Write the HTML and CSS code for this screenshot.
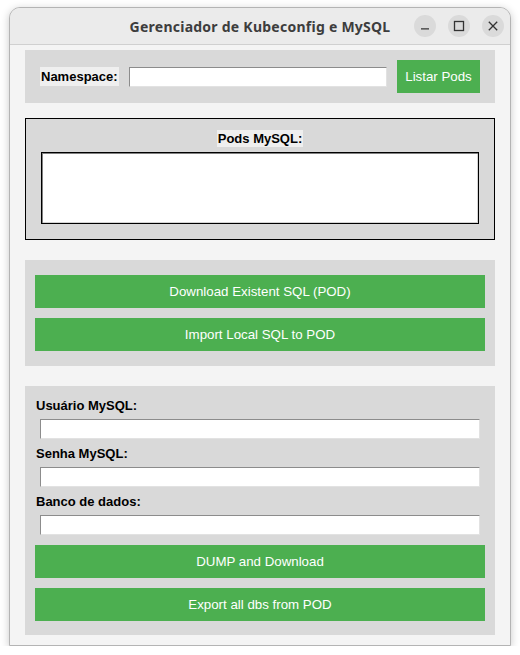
FILE: index.html
```html
<!DOCTYPE html>
<html lang="pt">
<head>
<meta charset="utf-8">
<title>Gerenciador de Kubeconfig e MySQL</title>
<link rel="stylesheet" href="styles.css">
</head>
<body>
<div class="window">
  <div class="titlebar">
    <span class="title">Gerenciador de Kubeconfig e MySQL</span>
    <div class="controls">
      <span class="ctl"><svg width="22" height="22" viewBox="0 0 22 22"><path d="M7 13.8h8" stroke="#333" stroke-width="1.3" fill="none"/></svg></span>
      <span class="ctl"><svg width="22" height="22" viewBox="0 0 22 22"><rect x="6.5" y="6.5" width="9" height="9" stroke="#333" stroke-width="1.3" fill="none"/></svg></span>
      <span class="ctl"><svg width="22" height="22" viewBox="0 0 22 22"><path d="M6.8 6.8l8.4 8.4M15.2 6.8l-8.4 8.4" stroke="#333" stroke-width="1.3" fill="none"/></svg></span>
    </div>
  </div>
  <div class="content">
    <div class="frame ns">
      <span class="lbl hl">Namespace:</span>
      <div class="entry grow"></div>
      <div class="btn small">Listar Pods</div>
    </div>
    <div class="frame pods">
      <span class="lbl hl pods-lbl">Pods MySQL:</span>
      <div class="listbox"></div>
    </div>
    <div class="frame actions">
      <div class="btn">Download Existent SQL (POD)</div>
      <div class="btn">Import Local SQL to POD</div>
    </div>
    <div class="frame creds">
      <span class="lbl field-lbl">Usuário MySQL:</span>
      <div class="entry field"></div>
      <span class="lbl field-lbl">Senha MySQL:</span>
      <div class="entry field"></div>
      <span class="lbl field-lbl">Banco de dados:</span>
      <div class="entry field"></div>
      <div class="btn first">DUMP and Download</div>
      <div class="btn">Export all dbs from POD</div>
    </div>
  </div>
</div>
</body>
</html>
```
FILE: styles.css
```css
html, body {
  margin: 0;
  padding: 0;
  background: #ffffff;
}
body {
  font-family: "Liberation Sans", Arial, sans-serif;
  font-size: 13px;
  color: #000;
}
.window {
  box-sizing: border-box;
  margin: 7px 0 0 9px;
  width: 502px;
  border: 1px solid #b4b4b4;
  border-radius: 11px 11px 0 0;
  background: #f4f4f4;
  box-shadow: 0 2px 9px rgba(0, 0, 0, 0.22);
  overflow: hidden;
}
.titlebar {
  position: relative;
  height: 36px;
  background: #ebebeb;
  border-bottom: 1px solid #d0d0d0;
  display: flex;
  align-items: center;
  justify-content: center;
}
.title {
  font-family: "Noto Sans", "DejaVu Sans", sans-serif;
  font-weight: 700;
  font-size: 14px;
  color: #3d3d3d;
  letter-spacing: 0.25px;
}
.controls {
  position: absolute;
  right: 6px;
  top: 7px;
  display: flex;
  gap: 12px;
}
.ctl {
  width: 22px;
  height: 22px;
  border-radius: 50%;
  background: #dadada;
  display: block;
}
.ctl svg { display: block; }
.content {
  padding: 5px 15px 10px;
  display: flex;
  flex-direction: column;
}
.frame {
  background: #d9d9d9;
}
.lbl {
  font-weight: 700;
  line-height: 19px;
  padding: 0 1px;
  white-space: nowrap;
}
.hl {
  background: #efefef;
}
.entry {
  box-sizing: border-box;
  height: 20px;
  background: #fff;
  border: 1px solid;
  border-color: #8c8c8c #e2e2e2 #e2e2e2 #8c8c8c;
}
.btn {
  box-sizing: border-box;
  height: 33px;
  background: #4caf50;
  color: #ffffff;
  font-size: 13.3px;
  display: flex;
  align-items: center;
  justify-content: center;
  white-space: nowrap;
}
.ns {
  height: 53px;
  padding: 0 15px;
  display: flex;
  align-items: center;
}
.ns .grow {
  flex: 1;
  margin: 0 10px;
}
.btn.small {
  width: 83px;
}
.pods {
  margin-top: 15px;
  border: 1px solid #000;
  padding: 11px 15px 15px;
  display: flex;
  flex-direction: column;
  align-items: center;
}
.pods-lbl {
  line-height: 17px;
}
.listbox {
  box-sizing: border-box;
  margin-top: 5px;
  align-self: stretch;
  height: 72px;
  background: #fff;
  border: 1px solid #000;
  box-shadow: inset 1px 1px 0 #808080, inset -1px -1px 0 #d4d4d4;
}
.actions {
  margin-top: 20px;
  padding: 15px 10px;
  display: flex;
  flex-direction: column;
  gap: 10px;
}
.creds {
  margin-top: 20px;
  padding: 10px 10px 14px;
  display: flex;
  flex-direction: column;
}
.field-lbl {
  margin-top: 5px;
  align-self: flex-start;
}
.field-lbl:first-child {
  margin-top: 0;
}
.entry.field {
  margin: 4px 5px 0;
}
.creds .btn {
  margin-top: 10px;
}
```
